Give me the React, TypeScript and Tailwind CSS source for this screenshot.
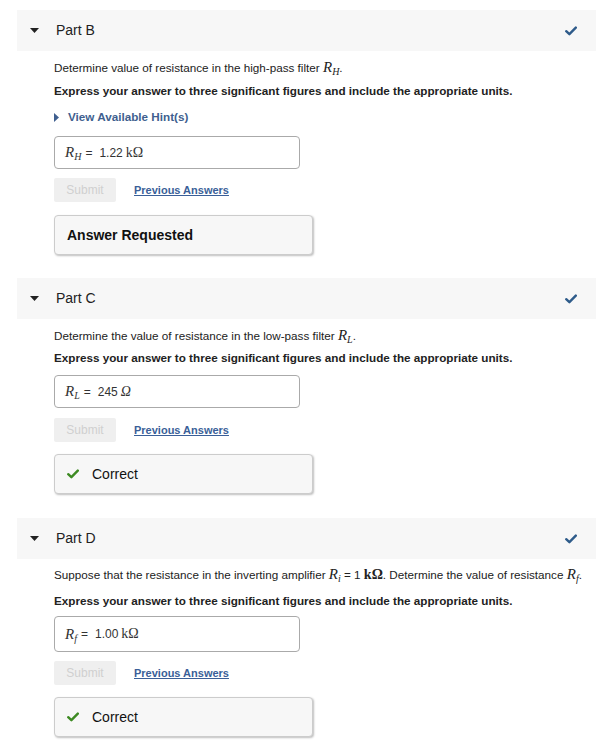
import React from 'react';

const serif = { fontFamily: '"Liberation Serif", "Times New Roman", serif' };

function CheckIcon({ color, className }: { color: string; className?: string }) {
    return (
        <svg viewBox="0 0 12 10" className={className} fill="none">
            <path d="M1.2 5.2 L4.4 8.2 L10.8 1.6" stroke={color} strokeWidth="2.4" strokeLinecap="round" strokeLinejoin="round" />
        </svg>
    );
}

function Var({ base, sub }: { base: string; sub: string }) {
    return (
        <span style={serif} className="italic leading-none">
            <span className="text-[15px] leading-none">{base}</span>
            <span className="text-[10px] leading-none relative top-[3px]">{sub}</span>
        </span>
    );
}

function PartHeader({ title }: { title: string }) {
    return (
        <div className="h-[41px] bg-[#f7f7f7] flex items-center pl-[13px] pr-[19px]">
            <svg viewBox="0 0 9 5" className="w-[9px] h-[5px]">
                <polygon points="0,0 9,0 4.5,5" fill="#222" />
            </svg>
            <span className="ml-[17px] text-[14px] text-[#222]">{title}</span>
            <CheckIcon color="#2e5b8a" className="ml-auto w-[12px] h-[10px]" />
        </div>
    );
}

function AnswerInput({ base, sub, value, unit, unitItalic, tall }: { base: string; sub: string; value: string; unit: string; unitItalic?: boolean; tall?: boolean }) {
    return (
        <div className={`w-[246px] ${tall ? 'h-[36px]' : 'h-[33px]'} border border-[#aaa] rounded-[4px] flex items-center pl-[10px] text-[12px] text-[#333]`}>
            <Var base={base} sub={sub} />
            <span className="ml-[4px]">=</span>
            <span className="ml-[7px]">{value}</span>
            <span style={serif} className={`ml-[3px] text-[14px] leading-none ${unitItalic ? 'italic' : ''}`}>{unit}</span>
        </div>
    );
}

function SubmitRow() {
    return (
        <div className="flex items-center">
            <div className="w-[62px] h-[24px] bg-[#efefef] rounded-[2px] flex items-center justify-center text-[12px] text-[#d0d0d0]">Submit</div>
            <span className="ml-[18px] text-[11px] font-bold text-[#3a5f98] underline">Previous Answers</span>
        </div>
    );
}

function ResultBox({ correct }: { correct: boolean }) {
    return (
        <div className="w-[259px] h-[40px] bg-[#f7f7f7] border border-[#ccc] rounded-[4px] shadow-[1px_1px_2px_rgba(0,0,0,0.25)] flex items-center pl-[12px] text-[14px] text-[#111]">
            {correct ? (
                <>
                    <CheckIcon color="#3d8a22" className="w-[12px] h-[10px]" />
                    <span className="ml-[13px]">Correct</span>
                </>
            ) : (
                <span className="font-bold">Answer Requested</span>
            )}
        </div>
    );
}

export default function App() {
    return (
        <div className="w-[614px] h-[754px] bg-white pt-[10px] pl-[17px] pr-[18px] overflow-hidden" style={{ fontFamily: '"Liberation Sans", Arial, sans-serif' }}>
            {/* Part B */}
            <PartHeader title="Part B" />
            <div className="pl-[37px] text-[11.7px] text-[#222]">
                <p className="mt-[9px] h-[16px] leading-[16px]">
                    Determine value of resistance in the high-pass filter <Var base="R" sub="H" />.
                </p>
                <p className="mt-[7px] h-[16px] leading-[16px] font-bold">Express your answer to three significant figures and include the appropriate units.</p>
                <div className="mt-[10px] h-[16px] flex items-center text-[#3f5f8f] font-bold">
                    <svg viewBox="0 0 5 9" className="w-[5px] h-[9px]">
                        <polygon points="0,0 5,4.5 0,9" fill="#3f5f8f" />
                    </svg>
                    <span className="ml-[9px]">View Available Hint(s)</span>
                </div>
                <div className="mt-[11px]">
                    <AnswerInput base="R" sub="H" value="1.22" unit="kΩ" />
                </div>
                <div className="mt-[9px]"><SubmitRow /></div>
                <div className="mt-[13px]"><ResultBox correct={false} /></div>
            </div>

            {/* Part C */}
            <div className="mt-[23px]"><PartHeader title="Part C" /></div>
            <div className="pl-[37px] text-[11.7px] text-[#222]">
                <p className="mt-[9px] h-[16px] leading-[16px]">
                    Determine the value of resistance in the low-pass filter <Var base="R" sub="L" />.
                </p>
                <p className="mt-[6px] h-[16px] leading-[16px] font-bold">Express your answer to three significant figures and include the appropriate units.</p>
                <div className="mt-[9px]">
                    <AnswerInput base="R" sub="L" value="245" unit="Ω" unitItalic />
                </div>
                <div className="mt-[10px]"><SubmitRow /></div>
                <div className="mt-[12px]"><ResultBox correct /></div>
            </div>

            {/* Part D */}
            <div className="mt-[24px]"><PartHeader title="Part D" /></div>
            <div className="pl-[37px] text-[11.7px] text-[#222]">
                <p className="mt-[8px] h-[16px] leading-[16px] whitespace-nowrap">
                    Suppose that the resistance in the inverting amplifier <Var base="R" sub="i" /> = 1 <span style={serif} className="font-bold text-[14px] leading-none">kΩ</span>. Determine the value of resistance <Var base="R" sub="f" />.
                </p>
                <p className="mt-[10px] h-[16px] leading-[16px] font-bold">Express your answer to three significant figures and include the appropriate units.</p>
                <div className="mt-[7px]">
                    <AnswerInput base="R" sub="f" value="1.00" unit="kΩ" tall />
                </div>
                <div className="mt-[9px]"><SubmitRow /></div>
                <div className="mt-[12px]"><ResultBox correct /></div>
            </div>
        </div>
    );
}
